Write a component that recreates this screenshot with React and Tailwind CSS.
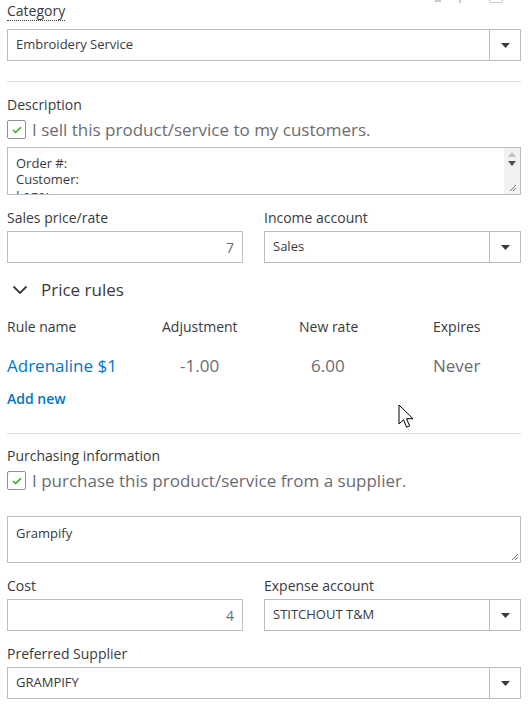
import React from 'react';

const font = { fontFamily: '"Open Sans", "Noto Sans", sans-serif' };

const Caret = () => (
  <svg width="9" height="5" viewBox="0 0 9 5"><path d="M0 0h9L4.5 5z" fill="#393a3d" /></svg>
);

const Select = ({ value, className = '' }) => (
  <div className={`flex h-8 items-stretch border border-[#babec5] bg-white ${className}`}>
    <div className="flex flex-1 items-center pl-2 text-[13px] text-[#393a3d]">{value}</div>
    <div className="flex w-[31px] items-center justify-center border-l border-[#babec5]">
      <Caret />
    </div>
  </div>
);

const NumInput = ({ value }) => (
  <div className="flex h-8 items-center justify-end border border-[#babec5] bg-white pr-2 text-[14px] text-[#6b6c72]">
    {value}
  </div>
);

const Check = ({ label }) => (
  <div className="flex h-[19px] items-center gap-[6px]">
    <div className="flex h-[19px] w-[19px] items-center justify-center rounded-[2px] border border-[#8d9096] bg-white">
      <svg width="10" height="8" viewBox="0 0 10 8"><path d="M1 4l2.6 2.6L9 1.2" fill="none" stroke="#2ca01c" strokeWidth="1.4" /></svg>
    </div>
    <span className="text-[17px] leading-none text-[#6b6c72]">{label}</span>
  </div>
);

const Label = ({ children, className = '' }) => (
  <div className={`text-[14px] leading-5 text-[#393a3d] ${className}`}>{children}</div>
);

export default function App() {
  return (
    <div className="relative h-[722px] w-[531px] overflow-hidden bg-white pl-[7px] pr-[10px]" style={font}>
      <div className="absolute right-[28px] top-[-8px] h-[11px] w-[14px] rounded-[2px] border border-[#c9cbcf]" />
      <div className="absolute right-[90px] top-0 h-[2px] w-[6px] bg-[#c9cbcf]" />
      <div className="absolute right-[70px] top-0 h-[3px] w-[2px] bg-[#c9cbcf]" />

      <div className="pt-[1px] text-[14px] leading-5">
        <span className="border-b border-dotted border-[#393a3d] text-[#393a3d]">Category</span>
      </div>
      <Select value="Embroidery Service" className="mt-[8px]" />

      <div className="mt-[20px] border-t border-[#dcdde0]" />

      <Label className="mt-[13px]">Description</Label>
      <div className="mt-[5px]"><Check label="I sell this product/service to my customers." /></div>

      <div className="relative mt-[8px] h-[48px] overflow-hidden border border-[#babec5] pl-2 pt-[7px] text-[13px] leading-4 text-[#393a3d]">
        <div>Order #:</div>
        <div>Customer:</div>
        <div>Logo:</div>
        <div className="absolute right-0 top-0 flex h-full w-[16px] flex-col items-center bg-[#f1f1f1]">
          <svg className="mt-[4px]" width="8" height="5" viewBox="0 0 8 5"><path d="M0 5h8L4 0z" fill="#c1c1c1" /></svg>
          <svg className="mt-[4px]" width="8" height="5" viewBox="0 0 8 5"><path d="M0 0h8L4 5z" fill="#505050" /></svg>
          <svg className="mt-auto mb-[2px]" width="10" height="10" viewBox="0 0 10 10"><path d="M9 3L3 9M9 6L6 9" stroke="#777" strokeWidth="1" /></svg>
        </div>
      </div>

      <div className="mt-[13px] grid grid-cols-[236px_1fr] gap-x-[21px]">
        <Label>Sales price/rate</Label>
        <Label>Income account</Label>
        <div className="mt-[3px]"><NumInput value="7" /></div>
        <div className="mt-[3px]"><Select value="Sales" /></div>
      </div>

      <div className="mt-[15px] flex h-6 items-center">
        <svg className="ml-[5px]" width="16" height="10" viewBox="0 0 16 10"><path d="M1.5 1.5L8 8l6.5-6.5" fill="none" stroke="#393a3d" strokeWidth="1.8" /></svg>
        <span className="ml-[13px] text-[17px] leading-6 text-[#393a3d]">Price rules</span>
      </div>

      <div className="mt-[15px] grid grid-cols-[155px_137px_134px_1fr] text-[14px] leading-5 text-[#393a3d]">
        <div>Rule name</div>
        <div>Adjustment</div>
        <div>New rate</div>
        <div>Expires</div>
      </div>
      <div className="mt-[17px] grid grid-cols-[155px_137px_134px_1fr] text-[17px] leading-6 text-[#6b6c72]">
        <div className="text-[#0077c5]">Adrenaline $1</div>
        <div className="pl-[18px]">-1.00</div>
        <div className="pl-[12px]">6.00</div>
        <div>Never</div>
      </div>
      <div className="mt-[11px] text-[14px] leading-5 font-semibold text-[#0077c5]">Add new</div>

      <svg className="absolute left-[398px] top-[404px]" width="18" height="26" viewBox="0 0 18 26">
        <path d="M1 1v19l4.5-4.2 3.2 7.4 3-1.3-3.2-7.2H15z" fill="#fff" stroke="#000" strokeWidth="1" />
      </svg>

      <div className="mt-[24px] border-t border-[#dcdde0]" />

      <Label className="mt-[12px]">Purchasing information</Label>
      <div className="mt-[5px]"><Check label="I purchase this product/service from a supplier." /></div>

      <div className="relative mt-[26px] h-[47px] border border-[#babec5] pl-2 pt-[7px] text-[13px] text-[#393a3d]">
        Grampify
        <svg className="absolute bottom-[1px] right-[1px]" width="10" height="10" viewBox="0 0 10 10"><path d="M9 3L3 9M9 6L6 9" stroke="#777" strokeWidth="1" /></svg>
      </div>

      <div className="mt-[13px] grid grid-cols-[236px_1fr] gap-x-[21px]">
        <Label>Cost</Label>
        <Label>Expense account</Label>
        <div className="mt-[3px]"><NumInput value="4" /></div>
        <div className="mt-[3px]"><Select value="STITCHOUT T&M" /></div>
      </div>

      <Label className="mt-[13px]">Preferred Supplier</Label>
      <Select value="GRAMPIFY" className="mt-[3px]" />
    </div>
  );
}
